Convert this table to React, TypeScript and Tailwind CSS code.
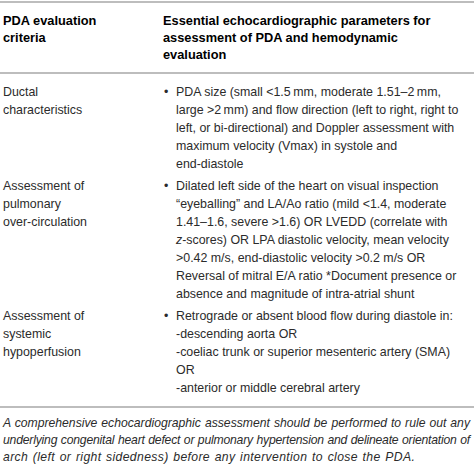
const rows = [
  {
    criteria: ["Ductal", "characteristics"],
    lines: [
      <>PDA size (small &lt;1.5&#8201;mm, moderate 1.51–2&#8201;mm,</>,
      <>large &gt;2&#8201;mm) and flow direction (left to right, right to</>,
      <>left, or bi-directional) and Doppler assessment with</>,
      <>maximum velocity (Vmax) in systole and</>,
      <>end-diastole</>,
    ],
  },
  {
    criteria: ["Assessment of", "pulmonary", "over-circulation"],
    lines: [
      <>Dilated left side of the heart on visual inspection</>,
      <>“eyeballing” and LA/Ao ratio (mild &lt;1.4, moderate</>,
      <>1.41–1.6, severe &gt;1.6) OR LVEDD (correlate with</>,
      <><i>z</i>-scores) OR LPA diastolic velocity, mean velocity</>,
      <>&gt;0.42 m/s, end-diastolic velocity &gt;0.2 m/s OR</>,
      <>Reversal of mitral E/A ratio *Document presence or</>,
      <>absence and magnitude of intra-atrial shunt</>,
    ],
  },
  {
    criteria: ["Assessment of", "systemic", "hypoperfusion"],
    lines: [
      <>Retrograde or absent blood flow during diastole in:</>,
      <>-descending aorta OR</>,
      <>-coeliac trunk or superior mesenteric artery (SMA)</>,
      <>OR</>,
      <>-anterior or middle cerebral artery</>,
    ],
  },
];

export default function App() {
  return (
    <div className="w-[474px] h-[465px] bg-white text-[12.4px] leading-[18px] text-[#2b2b2b] font-['Liberation_Sans',Arial,sans-serif] overflow-hidden">
      {/* Table */}
      <div className="border-t-2 border-b-2 border-[#bdbdbd] mt-[1px]">
        {/* Header */}
        <div className="grid grid-cols-[163px_1fr] font-bold text-black text-[12.8px] leading-[17px] pt-[9px] pb-[9px] border-b-2 border-[#bdbdbd] whitespace-nowrap">
          <div className="pl-[3px]">
            <div>PDA evaluation</div>
            <div>criteria</div>
          </div>
          <div>
            <div>Essential echocardiographic parameters for</div>
            <div>assessment of PDA and hemodynamic</div>
            <div>evaluation</div>
          </div>
        </div>

        {/* Body */}
        <div className="flex flex-col gap-[4px] pt-[9px] pb-[9px]">
          {rows.map((row) => (
            <div key={row.criteria.join(" ")} className="grid grid-cols-[163px_1fr] whitespace-nowrap">
              <div className="pl-[3px]">
                {row.criteria.map((c) => (
                  <div key={c}>{c}</div>
                ))}
              </div>
              <div className="flex">
                <span className="w-[13px] pl-[1px] flex-shrink-0">•</span>
                <div className="flex-1">
                  {row.lines.map((line, i) => (
                    <div key={i}>{line}</div>
                  ))}
                </div>
              </div>
            </div>
          ))}
        </div>
      </div>

      {/* Footnote */}
      <div className="italic text-[12.2px] leading-[17px] pl-[3px] pr-[4px] pt-[7px] whitespace-nowrap">
        <div className="text-justify [text-align-last:justify]">
          A comprehensive echocardiographic assessment should be performed to rule out any
        </div>
        <div className="text-justify [text-align-last:justify] tracking-[-0.2px]">
          underlying congenital heart defect or pulmonary hypertension and delineate orientation of
        </div>
        <div className="tracking-[0.35px] [word-spacing:1px]">
          arch (left or right sidedness) before any intervention to close the PDA.
        </div>
      </div>
    </div>
  );
}
